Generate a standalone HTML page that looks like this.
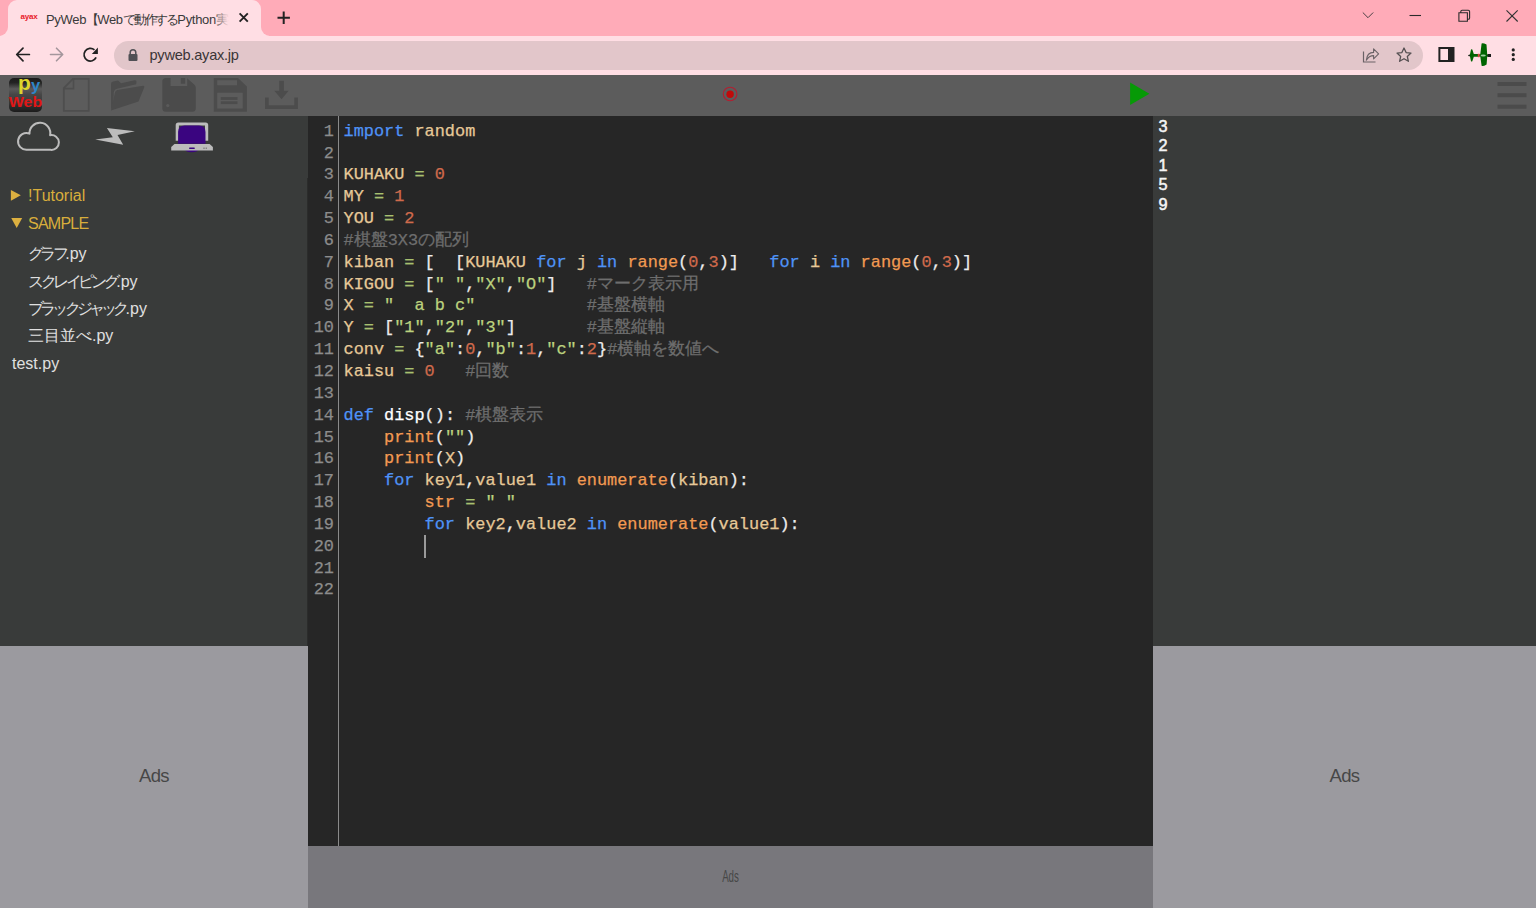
<!DOCTYPE html>
<html><head><meta charset="utf-8">
<style>
*{margin:0;padding:0;box-sizing:border-box}
html,body{width:1536px;height:908px;overflow:hidden;background:#393a39;font-family:"Liberation Sans",sans-serif}
.a{position:absolute}
#tabstrip{left:0;top:0;width:1536px;height:36px;background:#ffabb8}
#tab{left:8px;top:0px;width:253px;height:36px;background:#ffdee4;border-radius:9px 9px 0 0}
#tabl{left:0;top:26px;width:8px;height:10px;background:#ffdee4}
#tabl:after{content:"";position:absolute;left:-2px;top:-2px;width:10px;height:12px;background:#ffabb8;border-bottom-right-radius:9px}
#tabr{left:261px;top:26px;width:8px;height:10px;background:#ffdee4}
#tabr:after{content:"";position:absolute;left:0;top:-2px;width:10px;height:12px;background:#ffabb8;border-bottom-left-radius:9px}
#navbar{left:0;top:36px;width:1536px;height:39px;background:#ffdee4}
#url{left:114px;top:40.5px;width:1308.5px;height:29px;background:#e2c6ca;border-radius:15px}
#apptb{left:0;top:75px;width:1536px;height:41px;background:#5c5c5c}
#side{left:0;top:116px;width:308px;height:530px;background:#393b3a}
#adl{left:0;top:646px;width:308px;height:262px;background:#9b9a9f}
#adr{left:1153px;top:646px;width:383px;height:262px;background:#9b9a9f}
#out{left:1153px;top:116px;width:383px;height:530px;background:#393b3a}
#ed{left:308px;top:116px;width:845px;height:730px;background:#262626}
#gl{left:338px;top:116px;width:1px;height:730px;background:#8a8a8a}
#adb{left:308px;top:846px;width:845px;height:62px;background:#78777c}
.ads{color:#474747;font-size:18.5px;letter-spacing:-0.7px}
.code{font-family:"Liberation Mono",monospace;font-size:16.9px;line-height:21.84px;white-space:pre;-webkit-text-stroke:0.25px currentColor}
#gut{left:308px;top:120.7px;width:26px;text-align:right;color:#8c8c8c}
#src{left:343.5px;top:120.7px;color:#e6c998}
.k{color:#4f93f7}.o{color:#a8c070}.n{color:#cf6a4c}.s{color:#bcd27e}.w{color:#ececec}.f{color:#f29a52}.c{color:#6e6e6e}.d{color:#ffffff}
#tree{left:0;top:182px;color:#e0e0e0;font-size:16px;line-height:27.67px}
#tree div{white-space:nowrap;position:absolute}
#tree span{position:static}
.fold{color:#d8ae3c}
#outtxt{left:1158.5px;top:117px;color:#f5f5f5;font-size:16.3px;line-height:19.4px;-webkit-text-stroke:0.5px #f5f5f5}

#cursor{left:424px;top:535px;width:2px;height:23px;background:#9a9a9a}
.t{position:absolute;white-space:nowrap}
</style></head><body>
<div id="tabstrip" class="a"></div>
<div id="tab" class="a"></div>
<div id="tabl" class="a"></div>
<div id="tabr" class="a"></div>
<div id="navbar" class="a"></div>
<div id="url" class="a"></div>
<div id="apptb" class="a"></div>
<div id="side" class="a"></div>
<div id="out" class="a"></div>
<div id="adl" class="a"></div>
<div id="adr" class="a"></div>
<div id="ed" class="a"></div>
<div id="gl" class="a"></div>
<div class="a" style="left:307px;top:178px;width:1px;height:468px;background:#2b2c2b"></div>
<div id="adb" class="a"></div>
<div id="gut" class="a code">1
2
3
4
5
6
7
8
9
10
11
12
13
14
15
16
17
18
19
20
21
22</div>
<div id="src" class="a code"><span class="k">import</span> random

KUHAKU <span class="o">=</span> <span class="n">0</span>
MY <span class="o">=</span> <span class="n">1</span>
YOU <span class="o">=</span> <span class="n">2</span>
<span class="c">#棋盤3X3の配列</span>
kiban <span class="o">=</span> <span class="w">[</span>  <span class="w">[</span>KUHAKU <span class="k">for</span> j <span class="k">in</span> <span class="f">range</span><span class="w">(</span><span class="n">0</span><span class="w">,</span><span class="n">3</span><span class="w">)]</span>   <span class="k">for</span> i <span class="k">in</span> <span class="f">range</span><span class="w">(</span><span class="n">0</span><span class="w">,</span><span class="n">3</span><span class="w">)]</span>
KIGOU <span class="o">=</span> <span class="w">[</span><span class="s">" "</span><span class="w">,</span><span class="s">"X"</span><span class="w">,</span><span class="s">"O"</span><span class="w">]</span>   <span class="c">#マーク表示用</span>
X <span class="o">=</span> <span class="s">"  a b c"</span>           <span class="c">#基盤横軸</span>
Y <span class="o">=</span> <span class="w">[</span><span class="s">"1"</span><span class="w">,</span><span class="s">"2"</span><span class="w">,</span><span class="s">"3"</span><span class="w">]</span>       <span class="c">#基盤縦軸</span>
conv <span class="o">=</span> <span class="w">{</span><span class="s">"a"</span><span class="w">:</span><span class="n">0</span><span class="w">,</span><span class="s">"b"</span><span class="w">:</span><span class="n">1</span><span class="w">,</span><span class="s">"c"</span><span class="w">:</span><span class="n">2</span><span class="w">}</span><span class="c">#横軸を数値へ</span>
kaisu <span class="o">=</span> <span class="n">0</span>   <span class="c">#回数</span>

<span class="k">def</span> <span class="d">disp</span><span class="w">():</span> <span class="c">#棋盤表示</span>
    <span class="f">print</span><span class="w">(</span><span class="s">""</span><span class="w">)</span>
    <span class="f">print</span><span class="w">(</span>X<span class="w">)</span>
    <span class="k">for</span> key1<span class="w">,</span>value1 <span class="k">in</span> <span class="f">enumerate</span><span class="w">(</span>kiban<span class="w">):</span>
        <span class="f">str</span> <span class="o">=</span> <span class="s">" "</span>
        <span class="k">for</span> key2<span class="w">,</span>value2 <span class="k">in</span> <span class="f">enumerate</span><span class="w">(</span>value1<span class="w">):</span>


</div>
<div id="cursor" class="a"></div>
<div class="t" style="left:20.5px;top:11.5px;color:#e8202a;font-size:8px;font-weight:bold;letter-spacing:-0.2px">ayax</div>
<div class="t" style="left:46px;top:10.5px;color:#3a3a3a;font-size:13px;letter-spacing:-0.3px;width:186px;overflow:hidden"><span>PyWeb</span><span style="letter-spacing:-2px">【</span><span>Web</span><span style="letter-spacing:-2.1px">で動作する</span><span>Python</span><span style="letter-spacing:-1px">実行環境</span></div>
<div class="t" style="left:214px;top:6px;width:20px;height:24px;background:linear-gradient(90deg,rgba(255,222,228,0),#ffdee4 75%)"></div>
<svg class="a" style="left:234px;top:8px" width="20" height="20" viewBox="234 8 20 20"><path d="M239.6,13.4 L247.8,21.6 M247.8,13.4 L239.6,21.6" stroke="#222" stroke-width="1.9" fill="none"/></svg>
<svg class="a" style="left:274px;top:8px" width="20" height="20" viewBox="274 8 20 20"><path d="M283.7,11.6 V24 M277.5,17.8 H289.9" stroke="#222" stroke-width="2" fill="none"/></svg>
<svg class="a" style="left:1358px;top:8px" width="20" height="16" viewBox="0 0 20 16"><path d="M4.8 4.5L10 9.7L15.2 4.5" stroke="#4a4044" stroke-width="1" fill="none"/></svg>
<svg class="a" style="left:1405px;top:8px" width="20" height="16" viewBox="0 0 20 16"><path d="M4.5 7.5H16" stroke="#2a2a2a" stroke-width="1.1" fill="none"/></svg>
<svg class="a" style="left:1454px;top:5px" width="20" height="20" viewBox="0 0 20 20"><path d="M4.9 7.8H13.4V16.2H4.9Z M6.8 7.8V6.5Q6.8 5.2 8.1 5.2H14.3Q15.6 5.2 15.6 6.5V12.9Q15.6 14.2 14.3 14.2H13.4" stroke="#2a2a2a" stroke-width="1.1" fill="none"/></svg>
<svg class="a" style="left:1502px;top:6px" width="20" height="20" viewBox="0 0 20 20"><path d="M4.5 4.3L15.7 15.5M15.7 4.3L4.5 15.5" stroke="#333" stroke-width="1.1" fill="none"/></svg>
<svg class="a" style="left:10px;top:44px" width="24" height="22" viewBox="10 44 24 22"><path d="M29.4,54.5 H17 M23,48.2 L16.7,54.5 L23,60.8" stroke="#222" stroke-width="1.7" fill="none" stroke-linecap="round" stroke-linejoin="round"/></svg>
<svg class="a" style="left:46px;top:44px" width="22" height="22" viewBox="46 44 22 22"><path d="M50.5,54.5 H62.4 M56.5,48.2 L62.7,54.5 L56.5,60.8" stroke="#a4969c" stroke-width="1.6" fill="none" stroke-linecap="round" stroke-linejoin="round"/></svg>
<svg class="a" style="left:80px;top:44px" width="22" height="22" viewBox="80 44 22 22"><path d="M96.1,57.4 A6.3,6.3 0 1 1 94.45,49.9" stroke="#222" stroke-width="1.8" fill="none"/><path d="M97.9,47.6 V53.9 H91.8 Z" fill="#222"/></svg>
<svg class="a" style="left:126px;top:48px" width="14" height="14" viewBox="0 0 14 14"><path d="M4.2 6V4.5A2.8 2.8 0 0 1 9.8 4.5V6" stroke="#505055" stroke-width="1.5" fill="none"/><rect x="2.5" y="6" width="9" height="7" rx="1" fill="#505055"/></svg>
<div class="t" style="left:149.5px;top:46.5px;color:#3a3536;font-size:14.6px;letter-spacing:-0.25px">pyweb.ayax.jp</div>
<svg class="a" style="left:1360px;top:44px" width="22" height="22" viewBox="1360 44 22 22"><path d="M1363.5,51.5 V62 H1375.5" stroke="#6a6266" stroke-width="1.2" fill="none"/><path d="M1366.3,60.2 C1366.8,55.2 1369.8,52.4 1373.6,52.4 V48.8 L1378.6,53.9 L1373.6,58.9 V55.6 C1370.6,55.6 1368,57.3 1366.3,60.2 Z" stroke="#6a6266" stroke-width="1.1" fill="none" stroke-linejoin="round"/></svg>
<svg class="a" style="left:1394px;top:45px" width="20" height="20" viewBox="0 0 20 20"><path d="M10 3L12.1 7.6L17 8.1L13.3 11.4L14.4 16.3L10 13.7L5.6 16.3L6.7 11.4L3 8.1L7.9 7.6Z" stroke="#555052" stroke-width="1.3" fill="none" stroke-linejoin="round"/></svg>
<svg class="a" style="left:1437px;top:46px" width="18" height="18" viewBox="0 0 18 18"><rect x="2.4" y="2" width="14.1" height="13" stroke="#222" stroke-width="2" fill="none"/><rect x="11" y="2" width="5.5" height="13" fill="#222"/></svg>
<svg class="a" style="left:1460px;top:40px" width="40" height="30" viewBox="1460 40 40 30">
<path d="M1468.5,55.4 L1470,54.2 L1471,49.5 Q1471.6,48.9 1472.3,49.5 L1473.8,54 H1479 V56.8 H1473.8 L1472.3,61.3 Q1471.6,61.9 1471,61.3 L1470,56.6 Z" fill="#006400"/>
<path d="M1481.6,43.4 Q1483,42.6 1486.5,44.5 L1487.2,54.4 H1489.8 L1491.2,55.5 L1489.8,56.6 H1487.2 L1486.6,64.5 Q1483,66.6 1481.6,65.8 L1480.3,56.6 H1479 V54.2 H1480.3 Z" fill="#006400"/>
<rect x="1477.8" y="53.8" width="1.8" height="3.4" fill="#e04040"/>
<rect x="1487.6" y="54" width="3.4" height="3" fill="#1a1a1a"/>
<ellipse cx="1483.2" cy="55.5" rx="2.6" ry="0.9" fill="#9ed0a0"/>
<rect x="1468.3" y="54.9" width="1.8" height="1.2" fill="#222"/>
</svg>
<svg class="a" style="left:1506px;top:45px" width="14" height="20" viewBox="0 0 14 20"><circle cx="7.25" cy="4.9" r="1.6" fill="#222"/><circle cx="7.25" cy="9.65" r="1.6" fill="#222"/><circle cx="7.25" cy="14.4" r="1.6" fill="#222"/></svg>
<div class="a" style="left:8.5px;top:78px;width:33.5px;height:33.5px;border-radius:5px;background:linear-gradient(180deg,#1c1c1c 0%,#232323 14%,#5a5a5a 32%,#474747 48%,#3c3c3c 68%,#272727 88%,#1c1c1c 100%);overflow:hidden"></div>
<svg class="a" style="left:0;top:74px" width="310" height="42" viewBox="0 74 310 42">
<text x="18" y="90" font-family="Liberation Sans" font-weight="bold" font-size="21" fill="#dcd42c">p</text>
<text x="31" y="91" font-family="Liberation Sans" font-weight="bold" font-size="16.5" fill="#2e86c8">y</text>
<text x="8.8" y="106.8" font-family="Liberation Sans" font-weight="bold" font-size="15" fill="#e01616" textLength="33.5" lengthAdjust="spacingAndGlyphs">Web</text>
<path d="M73,78.9 H88.7 V110.8 H63.8 V88.2 Z" stroke="#4e4e4e" stroke-width="1.8" fill="none" stroke-linejoin="miter"/>
<path d="M73.5,78.5 V88.6 H63.5" stroke="#4e4e4e" stroke-width="1.6" fill="none"/>
<path d="M111,110.5 V84 Q111,82 113,81.6 L118,80.6 L121,83.3 L134.5,80.2 Q137,79.8 136.4,82.3 L136.2,84.3 L117,88.7 Q114,89.6 113.8,92.5 L113.3,103 Z" fill="#4c4c4c"/>
<path d="M115,92.6 Q115.3,90.6 117.3,90.1 L143,85.8 Q144.8,85.6 144.2,87.4 L138.5,101.6 L111,110.6 Z" fill="#4c4c4c"/>
<path d="M166,78 H186.8 L194.2,84.6 Q195.8,86 195.8,88 V108.2 Q195.8,111.7 192.3,111.7 H165.8 Q162.3,111.7 162.3,108.2 V81.5 Q162.3,78 166,78 Z M170.6,78 V86 H187.2 V78 Z" fill="#4b4b4b" fill-rule="evenodd"/>
<rect x="180.8" y="78" width="4.4" height="5.7" fill="#4b4b4b"/>
<circle cx="167.8" cy="105.6" r="1.6" fill="#5a5a5a"/>
<path d="M213.8,78 H238 L246.9,86.5 V111.7 H213.8 Z M217.2,80.3 V85.3 H237 V80.3 Z M217.2,92.7 V108.6 H242.7 V92.7 Z" fill="#4c4c4c" fill-rule="evenodd"/>
<rect x="220.8" y="97.1" width="16.7" height="2.8" fill="#4c4c4c"/>
<rect x="220.8" y="101.3" width="16.7" height="2.8" fill="#4c4c4c"/>
<path d="M266.9,97.4 V107.1 H296.1 V97.4" stroke="#4c4c4c" stroke-width="3.6" fill="none"/>
<path d="M279.2,80.8 H283.9 V90.7 H288.6 L281.55,99.2 L274.3,90.7 H279.2 Z" fill="#4c4c4c"/>
</svg>
<svg class="a" style="left:0;top:116px" width="308" height="40" viewBox="0 116 308 40">
<path d="M27.1,149.8 A8.4,8.4 0 1 1 29.5,133.6 A10.4,10.4 0 1 1 50.1,135.2 A7.4,7.4 0 1 1 50.5,149.8 Z" stroke="#bcbcbc" stroke-width="2" fill="none" stroke-linejoin="round"/>
<path d="M106.9,128 L134.9,131.3 L117.5,134.9 L123.2,144.8 L95.2,139.6 L112.8,137.3 Z" fill="#bcbcbc"/>
<path d="M177.3,140.8 V125 Q177.3,124 178.3,124 H205.6 Q206.6,124 206.6,125 V140.8" stroke="#bcbcbc" stroke-width="3.2" fill="none"/>
<path d="M178.1,143.8 V132 Q178.1,125.5 184.6,125.5 H199 Q205.5,125.5 205.5,132 V143.8 Z" fill="#3a0580"/>
<ellipse cx="191.7" cy="150" rx="6.5" ry="2.2" fill="#3a0580"/>
<path d="M171.2,147 L174.5,143.9 H209.6 L212.9,147 V150.6 H171.2 Z" fill="#bcbcbc"/>
<rect x="189" y="147.4" width="5.9" height="1.6" rx="0.8" fill="#3a0580"/>
<rect x="203.3" y="147.6" width="1.4" height="1.2" fill="#777"/><rect x="205.6" y="147.6" width="1.4" height="1.2" fill="#777"/>
</svg>
<svg class="a" style="left:0;top:180px" width="30" height="60" viewBox="0 180 30 60"><path d="M10.9,189.9 L20.8,195.35 L10.9,200.8 Z" fill="#dcb040"/><path d="M11.25,218 H22.2 L16.7,228 Z" fill="#dcb040"/></svg>
<div id="tree" class="a">
<div class="fold" style="left:28px;top:0.4px">!Tutorial</div>
<div class="fold" style="left:28px;top:27.8px;letter-spacing:-0.75px">SAMPLE</div>
<div style="left:28px;top:57.5px"><span class="jp" style="letter-spacing:-3.6px">グラフ</span>.py</div>
<div style="left:28px;top:85.5px"><span class="jp" style="letter-spacing:-3.4px">スクレイピング</span>.py</div>
<div style="left:28px;top:112.7px"><span class="jp" style="letter-spacing:-3.8px">ブラックジャック</span>.py</div>
<div style="left:28px;top:140.3px"><span class="jp" style="letter-spacing:0px">三目並べ</span>.py</div>
<div style="left:12px;top:167.5px">test.py</div>
</div>
<div id="outtxt" class="a">3<br>2<br>1<br>5<br>9</div>
<div class="t ads" style="left:0;width:308px;top:765px;text-align:center">Ads</div>
<div class="t ads" style="left:1153px;width:383px;top:765px;text-align:center">Ads</div>
<div class="t" style="left:308px;width:845px;top:866.5px;text-align:center;color:#474747;font-size:16.2px;transform:scaleX(0.6)">Ads</div>
<svg class="a" style="left:715px;top:80px" width="30" height="30" viewBox="715 80 30 30"><circle cx="730.1" cy="94" r="6.8" stroke="#b41e30" stroke-width="1.1" fill="none"/><circle cx="730.1" cy="94.2" r="3.7" fill="#c00a0a"/></svg>
<svg class="a" style="left:1125px;top:78px" width="30" height="30" viewBox="1125 78 30 30"><path d="M1130.1,82.4 L1149.4,93.7 L1130.1,105 Z" fill="#069a06"/></svg>
<svg class="a" style="left:1490px;top:76px" width="46" height="40" viewBox="1490 76 46 40"><rect x="1497.5" y="82" width="29" height="4" fill="#4b4b4b"/><rect x="1497.5" y="93.2" width="29" height="4" fill="#4b4b4b"/><rect x="1497.5" y="104.7" width="29" height="4" fill="#4b4b4b"/></svg>
</body></html>
